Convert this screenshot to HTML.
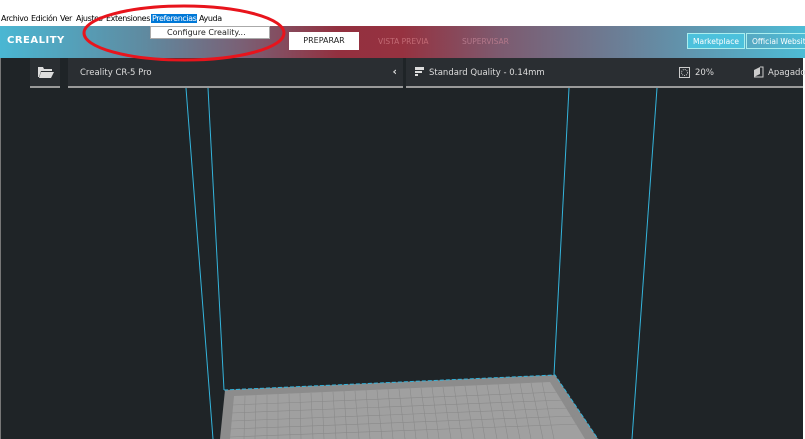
<!DOCTYPE html>
<html><head><meta charset="utf-8"><style>
*{margin:0;padding:0;box-sizing:border-box}
body{width:805px;height:439px;overflow:hidden;background:#fff;font-family:"DejaVu Sans","Liberation Sans",sans-serif;position:relative}
.menu span{position:absolute;top:14px;font-size:8px;color:#000;font-family:"DejaVu Sans",sans-serif;letter-spacing:-0.4px;white-space:nowrap}
.hdr{position:absolute;top:26px;left:0;width:805px;height:32px;background:linear-gradient(90deg,#4ab7d3 0%,#5f8aa0 18%,#7a6075 30%,#93303f 42%,#963240 50%,#7d5a6f 62%,#6a8199 78%,#4dbcd6 100%)}
.dark{position:absolute;top:58px;left:0;width:805px;height:381px;background:#1f2427;border-left:1px solid #777;border-right:2px solid #fff}
.panel{position:absolute;top:58px;height:30px;background:#2a2e32;border-bottom:2px solid #9a9a9a;color:#ddd;font-size:8.5px}
.btn{position:absolute;top:33px;height:16px;font-size:7.5px;color:#fff;border:1px solid #aee;padding:3px 5px}
</style></head><body>
<div class="menu"><span style="left:1px">Archivo</span><span style="left:31px">Edición</span><span style="left:60px">Ver</span><span style="left:76px">Ajustes</span><span style="left:106px">Extensiones</span><span style="left:151px;background:#0078d7;color:#fff;padding:0 1px;width:46px;overflow:hidden">Preferencias</span><span style="left:199px">Ayuda</span></div>
<div class="hdr">
 <div style="position:absolute;left:7px;top:9px;color:#fff;font-weight:bold;font-size:10px;letter-spacing:0.5px">CREALITY</div>
 <div style="position:absolute;left:289px;top:6px;width:70px;height:18px;background:#fff;color:#222;font-size:8px;text-align:center;line-height:18px">PREPARAR</div>
 <div style="position:absolute;left:378px;top:11px;color:#c26a74;font-size:7.5px">VISTA PREVIA</div>
 <div style="position:absolute;left:462px;top:11px;color:#b3788a;font-size:7.5px">SUPERVISAR</div>
</div>
<div class="btn" style="left:687px;background:#4cc1dc">Marketplace</div>
<div class="btn" style="left:746px;width:59px;border-right:none;overflow:hidden;white-space:nowrap">Official Website</div>
<div style="position:absolute;left:150px;top:26px;width:120px;height:13px;background:#fff;border:1px solid #aaa;font-size:8px;color:#222;padding:1px 0 0 16px">Configure Creality...</div>
<div class="dark"></div>
<div class="panel" style="left:30px;width:30px"><svg width="30" height="28" viewBox="0 0 30 28"><path d="M8 9h5l1 2h8v2H11l-2 6H8z" fill="#ddd"/><path d="M11 14h13l-3 6H9z" fill="#ddd"/></svg></div>
<div class="panel" style="left:68px;width:335px"><span style="position:absolute;left:12px;top:10px">Creality CR-5 Pro</span><span style="position:absolute;right:6px;top:7px;font-size:11px;font-weight:bold">‹</span></div>
<div class="panel" style="left:406px;width:397px">
 <svg style="position:absolute;left:9px;top:9px" width="10" height="12"><rect x="0" y="0" width="9" height="3" fill="#ddd"/><rect x="0" y="4" width="7" height="2" fill="#ddd"/><rect x="0" y="7" width="3" height="2" fill="#ddd"/></svg>
 <span style="position:absolute;left:23px;top:10px">Standard Quality - 0.14mm</span>
 <svg style="position:absolute;left:273px;top:9px" width="11" height="11"><rect x="0.5" y="0.5" width="10" height="10" fill="none" stroke="#ccc"/><circle cx="5.5" cy="5.5" r="3" fill="none" stroke="#ccc" stroke-dasharray="1 1"/></svg>
 <span style="position:absolute;left:289px;top:10px">20%</span>
 <svg style="position:absolute;left:347px;top:8px" width="11" height="12"><path d="M1 11V4l6-3v7z" fill="#ccc"/><path d="M7 1h3v10H1" fill="none" stroke="#ccc"/></svg>
 <span style="position:absolute;left:362px;top:10px">Apagado</span>
</div>
<svg style="position:absolute;left:0;top:0" width="805" height="439">
 <polygon points="225,390 555,375 598,439 220,439" fill="#8c8c8c"/>
 <polygon points="234,396 550,382 585,439 230,439" fill="#a0a0a0"/>
 <g stroke="#8a8a8a" stroke-width="0.6">
  <line x1="232" y1="405" x2="560" y2="392"/><line x1="231" y1="413" x2="565" y2="400"/><line x1="231" y1="421" x2="570" y2="408"/><line x1="230" y1="429" x2="575" y2="416"/><line x1="230" y1="437" x2="580" y2="424"/>
  <line x1="245" y1="396" x2="244" y2="439"/><line x1="256" y1="395" x2="255" y2="439"/><line x1="267" y1="395" x2="267" y2="439"/><line x1="278" y1="394" x2="278" y2="439"/><line x1="289" y1="394" x2="290" y2="439"/><line x1="300" y1="393" x2="301" y2="439"/><line x1="311" y1="393" x2="313" y2="439"/><line x1="322" y1="392" x2="324" y2="439"/><line x1="333" y1="392" x2="336" y2="439"/><line x1="344" y1="391" x2="347" y2="439"/><line x1="355" y1="391" x2="359" y2="439"/><line x1="366" y1="390" x2="370" y2="439"/><line x1="377" y1="390" x2="382" y2="439"/><line x1="388" y1="389" x2="393" y2="439"/><line x1="399" y1="389" x2="405" y2="439"/><line x1="410" y1="388" x2="416" y2="439"/><line x1="421" y1="388" x2="428" y2="439"/><line x1="432" y1="387" x2="439" y2="439"/><line x1="443" y1="387" x2="451" y2="439"/><line x1="454" y1="386" x2="462" y2="439"/><line x1="465" y1="386" x2="474" y2="439"/><line x1="476" y1="385" x2="485" y2="439"/><line x1="487" y1="385" x2="497" y2="439"/><line x1="498" y1="384" x2="508" y2="439"/><line x1="509" y1="384" x2="520" y2="439"/><line x1="520" y1="383" x2="531" y2="439"/><line x1="531" y1="383" x2="543" y2="439"/><line x1="542" y1="382" x2="554" y2="439"/>
 </g>
 <g stroke="#34b4dc" stroke-width="1" fill="none">
  <line x1="186" y1="88" x2="213" y2="439"/><line x1="208" y1="88" x2="224" y2="390"/>
  <line x1="569" y1="88" x2="554" y2="375"/><line x1="657" y1="88" x2="632" y2="439"/>
  <polyline points="224,390 555,375 598,439" stroke-dasharray="4 2"/>
 </g>
 <ellipse cx="184" cy="33" rx="100" ry="27" fill="none" stroke="#e8141c" stroke-width="3"/>
</svg>
</body></html>
